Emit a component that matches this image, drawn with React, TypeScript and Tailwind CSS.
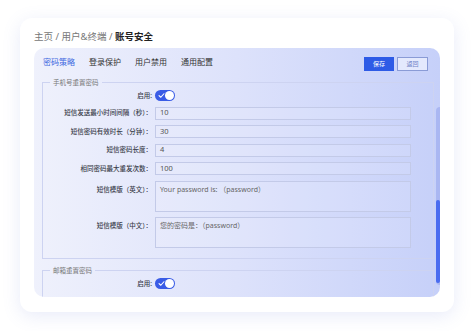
const font = { fontFamily: '"Noto Sans", "Noto Sans CJK SC", sans-serif' };

function Toggle() {
  return (
    <div className="relative h-[11px] w-[20px] rounded-full bg-[#3a5ce6]">
      <svg className="absolute left-[3px] top-[2px]" width="7" height="7" viewBox="0 0 10 10">
        <path d="M1.5 5.2 L4 7.5 L8.5 2.5" fill="none" stroke="white" strokeWidth="1.6" strokeLinecap="round" strokeLinejoin="round" />
      </svg>
      <div className="absolute right-[1px] top-[1px] h-[9px] w-[9px] rounded-full bg-white" />
    </div>
  );
}

function Row({ label, children, top = false }: { label: string; children: React.ReactNode; top?: boolean }) {
  return (
    <div className={`flex gap-[3px] ${top ? "items-start" : "items-center"}`}>
      <div className={`w-[109px] text-right text-[6.5px] font-medium text-[#3a3d4a] ${top ? "pt-[4px]" : ""}`}>{label}</div>
      {children}
    </div>
  );
}

function Field({ value }: { value: string }) {
  return (
    <div className="flex h-[13px] w-[256px] items-center border border-[#c3cae8] bg-white/10 px-[4px] text-[7.5px] text-[#555]">
      {value}
    </div>
  );
}

function Area({ value }: { value: string }) {
  return (
    <div className="h-[31px] w-[256px] border border-[#c3cae8] bg-white/10 px-[4px] pt-[3px] text-[7px] text-[#666]">
      {value}
    </div>
  );
}

export default function App() {
  const tabs = ["密码策略", "登录保护", "用户禁用", "通用配置"];
  return (
    <div className="h-[331px] w-[474px] bg-white pt-[18px] pl-[20px]" style={font}>
      <div className="w-[434px] rounded-[12px] bg-white px-[14px] pt-[13px] pb-[15px] shadow-[0_4px_18px_rgba(110,130,220,0.16)]">
        <div className="h-[12px] text-[9.5px] leading-[12px] text-[#777]">
          主页 / 用户&amp;终端 / <span className="font-semibold text-[#222]">账号安全</span>
        </div>
        <div className="relative mt-[5px] h-[249px] overflow-hidden rounded-[10px] bg-gradient-to-r from-[#eff1fc] via-[#dde2fb] to-[#c6d0f9]">
          <div className="flex h-[28px] items-center justify-between pl-[9px] pr-[12px]">
            <div className="flex gap-[14px] text-[8px]">
              {tabs.map((t, i) => (
                <span key={t} className={i === 0 ? "text-[#3b66e0]" : "text-[#333]"}>
                  {t}
                </span>
              ))}
            </div>
            <div className="flex gap-[3px] pt-[4px]">
              <div className="flex h-[14px] w-[30px] items-center justify-center bg-[#2e5be6] text-[6px] text-white">保存</div>
              <div className="flex h-[14px] w-[31px] items-center justify-center border border-[#8a9bd6] bg-[#e4e9fd] text-[6px] text-[#7083c8]">返回</div>
            </div>
          </div>
          <div className="mt-[2px] pl-[8px] pr-[6px]">
            <fieldset className="border border-[#cdd3f1] pb-[10px]">
              <legend className="ml-[7px] px-[3px] text-[6.5px] leading-[9px] text-[#777]">手机号重置密码</legend>
              <div className="flex flex-col gap-[5.5px] pt-[3px]">
                <Row label="启用:">
                  <Toggle />
                </Row>
                <Row label="短信发送最小时间间隔（秒）：">
                  <Field value="10" />
                </Row>
                <Row label="短信密码有效时长（分钟）：">
                  <Field value="30" />
                </Row>
                <Row label="短信密码长度：">
                  <Field value="4" />
                </Row>
                <Row label="相同密码最大重发次数：">
                  <Field value="100" />
                </Row>
                <Row label="短信模版（英文）：" top>
                  <Area value="Your password is: （password）" />
                </Row>
                <Row label="短信模版（中文）：" top>
                  <Area value="您的密码是：（password）" />
                </Row>
              </div>
            </fieldset>
            <fieldset className="mt-[7px] border border-[#cdd3f1] pb-[10px]">
              <legend className="ml-[7px] px-[3px] text-[6.5px] leading-[9px] text-[#777]">邮箱重置密码</legend>
              <div className="pt-[3px]">
                <Row label="启用:">
                  <Toggle />
                </Row>
              </div>
            </fieldset>
          </div>
          <div className="absolute right-0 top-[59px] h-[178px] w-[4px] rounded-l-full bg-[#aab7f2]">
            <div className="absolute bottom-[2px] left-0 h-[83px] w-[4px] rounded-full bg-[#4a6cf0]" />
          </div>
        </div>
      </div>
    </div>
  );
}
